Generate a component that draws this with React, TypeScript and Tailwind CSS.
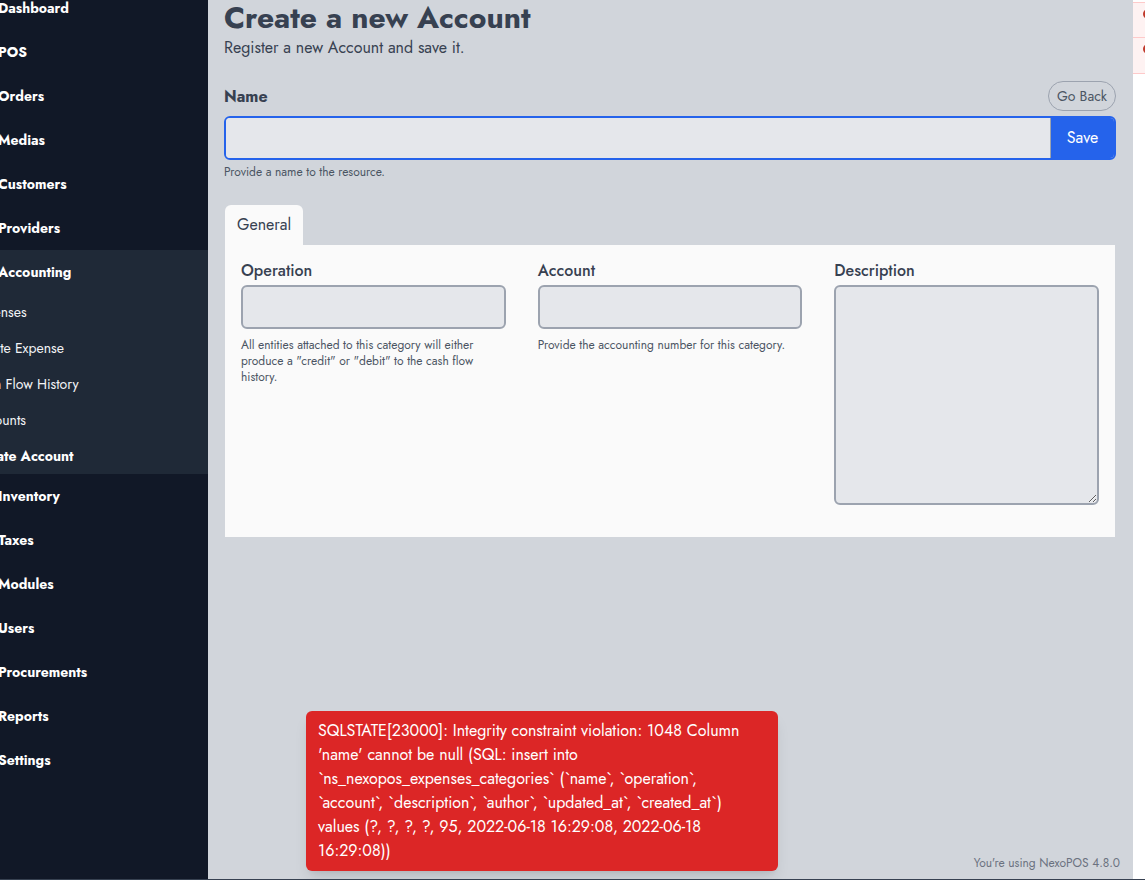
const before = ["Dashboard", "POS", "Orders", "Medias", "Customers", "Providers"];
const after = ["Inventory", "Taxes", "Modules", "Users", "Procurements", "Reports", "Settings"];
const subs = ["Expenses", "Create Expense", "Cash Flow History", "Accounts"];

function MenuItem({ label }: { label: string }) {
  return <div className="-ml-0.5 flex h-11 items-center text-sm font-bold whitespace-nowrap text-white">{label}</div>;
}

function Field({ label, help }: { label: string; help?: string }) {
  return (
    <div>
      <label className="block text-base leading-5 font-medium text-[#374151]">{label}</label>
      <div className="mt-1 h-11 rounded-md border-2 border-[#9ca3af] bg-[#e5e7eb]" />
      {help && <p className="mt-2 text-xs leading-4 text-[#4b5563]">{help}</p>}
    </div>
  );
}

export default function App() {
  return (
    <div className="relative flex h-[880px] w-[1145px] overflow-hidden bg-white font-['Jost','Lato','Liberation_Sans',sans-serif]">
      <aside className="h-full w-52 shrink-0 overflow-hidden bg-[#111827]">
        <div className="-mt-3.5">
          {before.map((m) => <MenuItem key={m} label={m} />)}
          <div className="bg-[#1f2937]">
            <MenuItem label="Accounting" />
            {subs.map((s) => (
              <div key={s} className="-ml-7 flex h-9 items-center text-sm whitespace-nowrap text-[#f3f4f6]">{s}</div>
            ))}
            <div className="-ml-[27px] flex h-9 items-center text-sm font-bold whitespace-nowrap text-white">Create Account</div>
          </div>
          {after.map((m) => <MenuItem key={m} label={m} />)}
        </div>
      </aside>

      <main className="flex h-full w-[925px] shrink-0 flex-col bg-[#d1d5db] pr-[17px] pl-[16px]">
        <h1 className="text-3xl leading-9 font-bold text-[#374151]">Create a new Account</h1>
        <p className="text-base leading-6 text-[#374151]">Register a new Account and save it.</p>

        <div className="mt-[21px] flex items-center justify-between">
          <span className="pt-[2px] text-base font-bold text-[#374151]">Name</span>
          <button className="h-[30px] rounded-full border border-[#9ca3af] px-2 text-sm text-[#4b5563]">Go Back</button>
        </div>
        <div className="mt-[5px] flex h-11 overflow-hidden rounded-md border-2 border-[#2563eb]">
          <div className="flex-1 border-r border-[#9ca3af] bg-[#e5e7eb]" />
          <button className="w-[63px] bg-[#2563eb] text-base text-white">Save</button>
        </div>
        <p className="mt-1 text-xs leading-4 text-[#4b5563]">Provide a name to the resource.</p>

        <div className="mx-px mt-[25px] flex">
          <div className="flex h-10 items-center rounded-t-md bg-[#fafafa] px-3 text-base text-[#374151]">General</div>
        </div>
        <div className="mx-px grid h-[292px] grid-cols-3 gap-x-8 bg-[#fafafa] px-4 pt-4">
          <Field label="Operation" help={'All entities attached to this category will either produce a "credit" or "debit" to the cash flow history.'} />
          <Field label="Account" help="Provide the accounting number for this category." />
          <div>
            <label className="block text-base leading-5 font-medium text-[#374151]">Description</label>
            <textarea className="mt-1 block h-[220px] w-full rounded-md border-2 border-[#9ca3af] bg-[#e5e7eb]" />
          </div>
        </div>

        <div className="mt-auto -mr-1 mb-[9px] text-right text-xs text-[#6b7280]">You're using NexoPOS 4.8.0</div>
      </main>

      <div className="min-w-0 flex-1 overflow-hidden pt-[2px]">
        <div className="h-9 border-y border-[#fecaca] bg-[#fef2f2] pt-[6px] pl-[10px]"><div className="h-2.5 w-2.5 rounded-full bg-[#c0392b]" /></div>
        <div className="h-9 border-b border-[#fecaca] bg-[#fef2f2] pt-[6px] pl-[10px]"><div className="h-2.5 w-2.5 rounded-full bg-[#c0392b]" /></div>
      </div>

      <div className="absolute top-[711px] left-[306px] w-[472px] rounded-md bg-[#dc2626] px-3 py-2 text-base leading-6 text-white shadow-lg">
        SQLSTATE[23000]: Integrity constraint violation: 1048 Column 'name' cannot be null (SQL: insert into `ns_nexopos_expenses_categories` (`name`, `operation`, `account`, `description`, `author`, `updated_at`, `created_at`) values (?, ?, ?, ?, 95, 2022-06-18 16:29:08, 2022-06-18 16:29:08))
      </div>
      <div className="absolute right-0 bottom-0 left-0 h-px bg-[#374151]" />
    </div>
  );
}
